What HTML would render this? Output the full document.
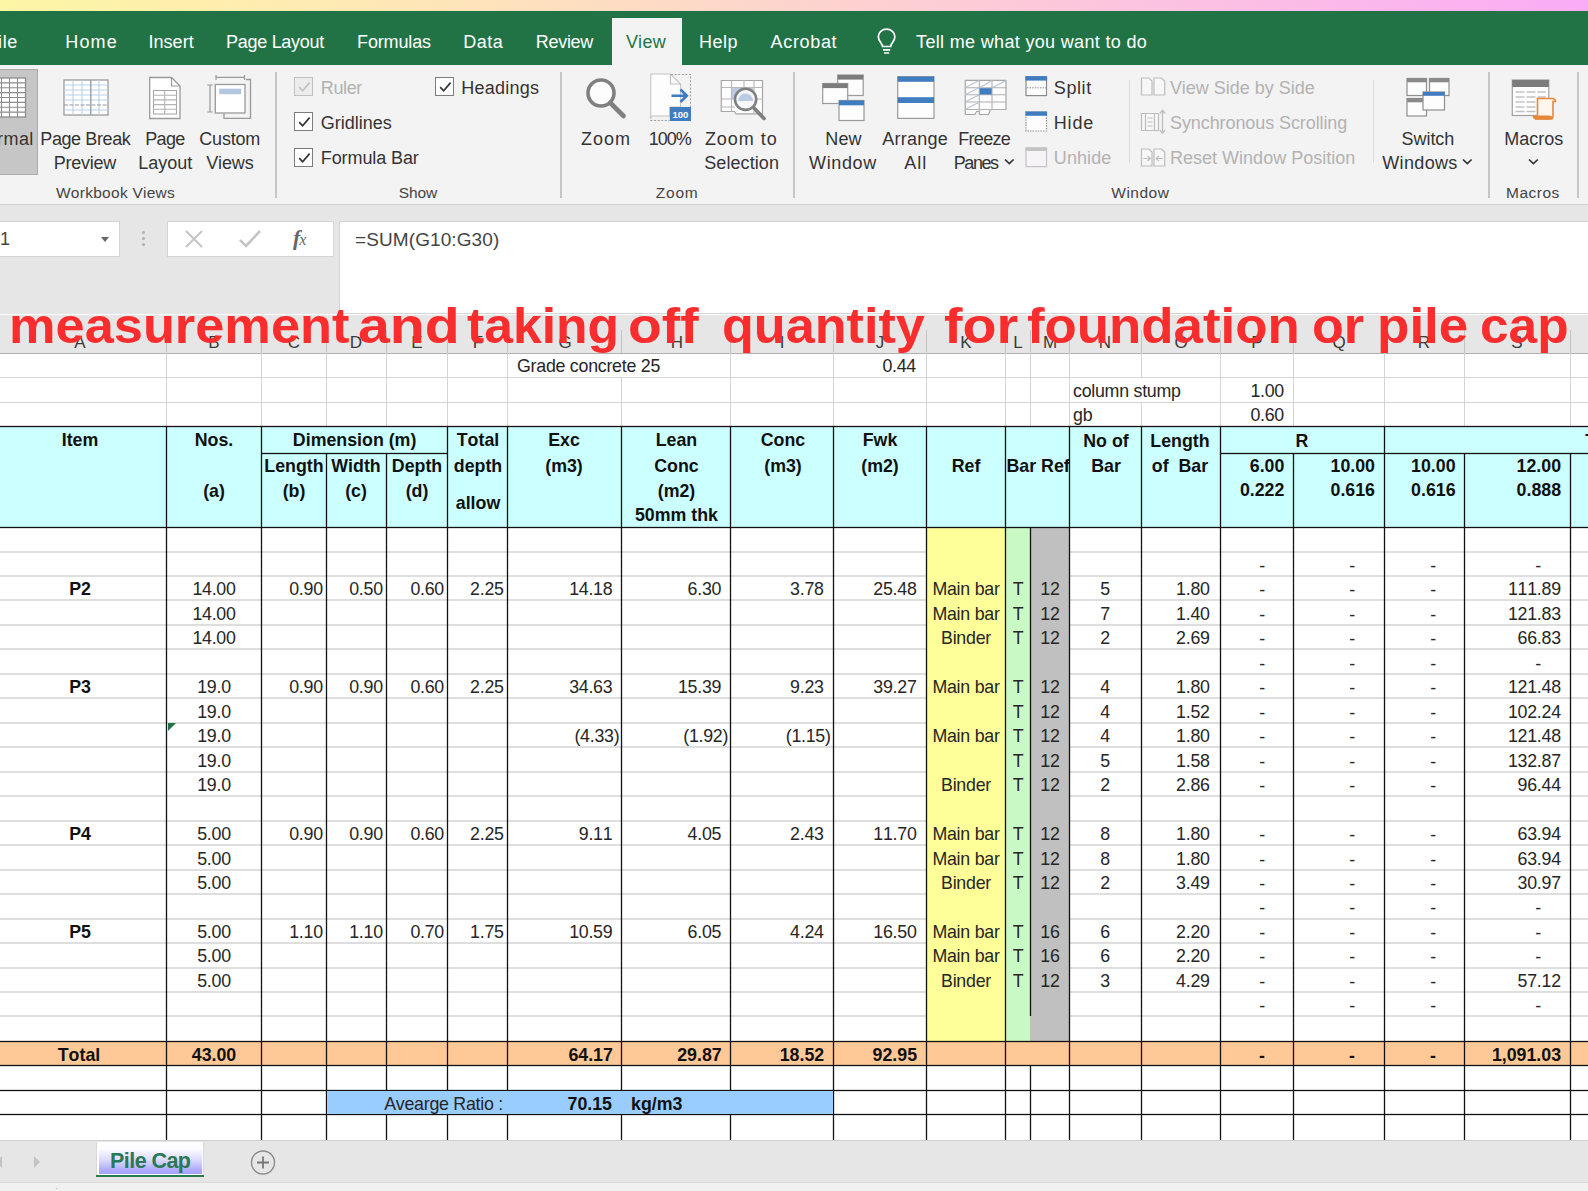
<!DOCTYPE html>
<html><head><meta charset="utf-8"><title>Pile Cap</title>
<style>
*{box-sizing:border-box;margin:0;padding:0}
html,body{width:1588px;height:1191px;overflow:hidden;background:#fff;font-family:"Liberation Sans",sans-serif;}
#page{position:absolute;left:0;top:0;width:1588px;height:1191px;overflow:hidden;background:#fff}
.r{position:absolute}
.vl{box-shadow:1px 0 0 rgba(0,0,0,.14),-1px 0 0 rgba(0,0,0,.14)}
.hl{box-shadow:0 1px 0 rgba(0,0,0,.14),0 -1px 0 rgba(0,0,0,.14)}
.t{position:absolute;height:24px;line-height:24px;font-size:17.8px;color:#262626;white-space:nowrap;letter-spacing:-0.25px;font-kerning:none}
.t.b{font-weight:bold;color:#111;letter-spacing:0}
.t.ch{font-size:17px;color:#3a3a3a;letter-spacing:0}
#grad{position:absolute;left:0;top:0;width:1588px;height:11px;background:linear-gradient(90deg,#fdf6a4 0%,#fee7b6 25%,#fdd4cd 50%,#fcc1e2 75%,#f9acf6 100%)}
#green{position:absolute;left:0;top:10.5px;width:1588px;height:54px;background:#217346}
.tab{position:absolute;top:29px;height:24px;line-height:24px;font-size:18px;color:#fff;white-space:nowrap;transform:translateX(-50%)}
#viewtab{position:absolute;left:612px;top:18px;width:70px;height:47px;background:#f3f3f3}
#ribbon{position:absolute;left:0;top:64.5px;width:1588px;height:139.5px;background:#f3f3f3}
#ribgap{position:absolute;left:0;top:204px;width:1588px;height:110px;background:#e6e6e6;border-top:1px solid #d2d2d2}
.rl{position:absolute;height:24px;line-height:24px;font-size:18px;color:#333;white-space:nowrap;transform:translateX(-50%)}
.rs{position:absolute;height:24px;line-height:24px;font-size:18px;color:#333;white-space:nowrap}
.dis{color:#b4b4b4}
.gl{position:absolute;height:20px;line-height:20px;font-size:15.5px;color:#444;white-space:nowrap;transform:translateX(-50%);top:182px}
.sep{position:absolute;top:72px;width:2px;height:126px;background:#c6c6c6}
.sep2{position:absolute;top:80px;width:1px;height:83px;background:#dcdcdc}
.cb{position:absolute;width:19px;height:19px;border:1.3px solid #7c7c7c;background:#fff}
.cb.d{border-color:#c0c0c0;background:#ececec}
svg{position:absolute;overflow:visible}
#title{position:absolute;left:0;top:293.8px;width:1588px;height:64px}
.tw{position:absolute;top:0;height:64px;line-height:64px;font-size:50px;font-weight:bold;color:#f92d2d;white-space:nowrap;transform-origin:0 50%}
</style></head><body><div id="page">
<div id="grad"></div>
<div id="green"></div>
<div id="viewtab"></div>
<div id="ribbon"></div>
<div id="ribgap"></div>
<div class="r" style="left:-3px;top:69px;width:41px;height:106px;background:#c6c6c6;border:1px solid #ababab"></div>
<div class="sep" style="left:275px"></div>
<div class="sep" style="left:560px"></div>
<div class="sep" style="left:793px"></div>
<div class="sep" style="left:1488px"></div>
<div class="sep" style="left:1577px"></div>
<div class="sep2" style="left:1128.5px"></div>
<div class="sep2" style="left:1372.5px"></div>
<div class="cb d" style="left:294px;top:76.5px"><svg style="left:3px;top:3px" width="13" height="12" viewBox="0 0 13 12"><path d="M1.2 6.2 L4.6 9.8 L11.6 1.6" stroke="#c2c2c2" stroke-width="1.7" fill="none"/></svg></div>
<div class="cb" style="left:294px;top:112px"><svg style="left:3px;top:3px" width="13" height="12" viewBox="0 0 13 12"><path d="M1.2 6.2 L4.6 9.8 L11.6 1.6" stroke="#333" stroke-width="1.7" fill="none"/></svg></div>
<div class="cb" style="left:294px;top:147.5px"><svg style="left:3px;top:3px" width="13" height="12" viewBox="0 0 13 12"><path d="M1.2 6.2 L4.6 9.8 L11.6 1.6" stroke="#333" stroke-width="1.7" fill="none"/></svg></div>
<div class="cb" style="left:435px;top:76.5px"><svg style="left:3px;top:3px" width="13" height="12" viewBox="0 0 13 12"><path d="M1.2 6.2 L4.6 9.8 L11.6 1.6" stroke="#333" stroke-width="1.7" fill="none"/></svg></div>
<svg style="left:0;top:0" width="1588" height="210" viewBox="0 0 1588 210" fill="none">
<!-- bulb -->
<g stroke="#fff" stroke-width="1.7" fill="none">
<path d="M882.5 46.5 C882.5 43 878.3 41.5 878.3 36.8 C878.3 32.2 882 29.2 886.6 29.2 C891.2 29.2 894.9 32.2 894.9 36.8 C894.9 41.5 890.7 43 890.7 46.5 Z"/>
<path d="M883 49.8 H890.2 M884 53 H889.2"/>
</g>
<!-- Normal icon (partly off-screen) -->
<g>
<rect x="-20" y="78" width="45.5" height="39" fill="#fff" stroke="#8c8c8c" stroke-width="1.3"/>
<path d="M-20 82.88H25.5 M-20 87.75H25.5 M-20 92.62H25.5 M-20 97.50H25.5 M-20 102.38H25.5 M-20 107.25H25.5 M-20 112.12H25.5 M17.5 78V117 M9.5 78V117 M1.5 78V117 M-6.5 78V117 M-14.5 78V117" stroke="#8c8c8c" stroke-width="1.1"/>
</g>
<!-- Page Break Preview -->
<g>
<rect x="64" y="80" width="44" height="35" fill="#fff" stroke="#9a9a9a" stroke-width="1.3"/>
<path d="M64 85H108 M64 90H108 M64 95H108 M64 100H108 M64 110H108 M73 80V115 M82 80V115 M99 80V115" stroke="#bcd0e8" stroke-width="1.1"/>
<path d="M90.8 80V115" stroke="#8f9aa8" stroke-width="1.3"/>
<path d="M64 105H108" stroke="#8f9aa8" stroke-width="1.2" stroke-dasharray="4 1.5"/>
</g>
<!-- Page Layout -->
<g>
<path d="M149.7 77.5 H171.5 L180 86 V118.5 H149.7 Z" fill="#fff" stroke="#9a9a9a" stroke-width="1.3"/>
<path d="M171.5 77.5 V86 H180" stroke="#9a9a9a" stroke-width="1.2"/>
<rect x="153.5" y="90.5" width="23" height="23.5" fill="#fff" stroke="#a8a8a8" stroke-width="1.1"/>
<path d="M153.5 95.2H176.5 M153.5 99.9H176.5 M153.5 104.6H176.5 M153.5 109.3H176.5 M164.7 90.5V114" stroke="#b4b4b4" stroke-width="1.1"/>
</g>
<!-- Custom Views -->
<g stroke="#9a9a9a" stroke-width="1.3">
<path d="M246 79.5 H250.5 V118.3 H224 V113.5"/>
<rect x="215.3" y="84.5" width="29.7" height="28.5" fill="#fff"/>
<rect x="219.2" y="88.7" width="22" height="5.5" fill="#b4c7e0" stroke="none"/>
<path d="M210 85V112 M207.3 85H212.7 M207.3 112H212.7 M216 77.3H244.5 M216 75V80 M244.5 75V80" stroke-width="1.2"/>
</g>
<!-- Zoom magnifier -->
<g>
<circle cx="601" cy="93" r="13" fill="#fdfdfd" stroke="#808080" stroke-width="3.6"/>
<path d="M610.5 103 L623.5 116" stroke="#808080" stroke-width="4.6" stroke-linecap="round"/>
</g>
<!-- 100% -->
<g>
<path d="M650.8 74 H670.5 L680.5 84 V107 H669.8 V116 H650.8 Z" fill="#fdfdfd" stroke="#c4c4c4" stroke-width="1.1"/>
<path d="M670.5 74 V84 H680.5" stroke="#bdbdbd" stroke-width="1.1"/>
<path d="M671 74.5 H690.5 V107 M650.8 116.5 V120.5 H669.5" stroke="#a0a0a0" stroke-width="1.1" stroke-dasharray="2 1.6"/>
<path d="M671.5 95.7 H686 M680.5 89.5 L686.8 95.7 L680.5 102" stroke="#3b7bc4" stroke-width="2.6"/>
<rect x="669.8" y="107" width="21.2" height="14" fill="#3f7cc0"/>
<text x="680.4" y="118" font-family="Liberation Sans, sans-serif" font-size="9.5" font-weight="bold" fill="#fff" text-anchor="middle" stroke="none">100</text>
</g>
<!-- Zoom to Selection -->
<g>
<path d="M721.3 80.5 H762.5 V113.8 H736 L734.5 111.5 H721.3 Z" fill="#fdfdfd" stroke="#a6a6a6" stroke-width="1.2"/>
<path d="M721.3 87.5H762.5 M721.3 99H762.5 M721.3 107H735 M731.5 80.5V111.5 M744 80.5V90 M754 80.5V113.8" stroke="#b8b8b8" stroke-width="1.1"/>
<rect x="732" y="88" width="21.5" height="11" fill="#bccbe4"/>
<circle cx="745.6" cy="99.3" r="10.6" fill="#f6f8fb" stroke="#808080" stroke-width="2.6"/>
<path d="M738 101 A7.6 7.6 0 0 1 753.2 101 Z" fill="#bccbe4" stroke="none"/>
<path d="M753.5 107.5 L764 118.5" stroke="#808080" stroke-width="3.8" stroke-linecap="round"/>
</g>
<!-- New Window -->
<g stroke="#9a9a9a" stroke-width="1.2">
<rect x="837.7" y="75" width="25.5" height="20.5" fill="#fdfdfd"/><rect x="837.7" y="75" width="25.5" height="4.6" fill="#7c7c7c" stroke="none"/>
<rect x="822.7" y="83.5" width="25" height="20" fill="#fdfdfd"/><rect x="822.7" y="83.5" width="25" height="4.6" fill="#7c7c7c" stroke="none"/>
<rect x="839" y="100.5" width="25" height="20" fill="#fdfdfd"/><rect x="839" y="100.5" width="25" height="4.8" fill="#3f7cc0" stroke="none"/>
</g>
<!-- Arrange All -->
<g>
<rect x="897.7" y="76.6" width="36.3" height="41.8" fill="#fdfdfd" stroke="#9a9a9a" stroke-width="1.2"/>
<rect x="897.7" y="76.6" width="36.3" height="5.2" fill="#3f7cc0"/>
<rect x="897.7" y="97.2" width="36.3" height="5.8" fill="#3f7cc0"/>
</g>
<!-- Freeze Panes -->
<g>
<path d="M965.3 80.3 H1006 V109.5 H990.5 L988.5 114.5 H979.5 V111.5 H976.5 L975 114.5 H965.3 Z" fill="#fdfdfd" stroke="#a6a6a6" stroke-width="1.2"/>
<path d="M965.3 87.8H1006 M965.3 94.8H1006 M965.3 102H1006 M965.3 109.5H1006 M979.3 80.3V114 M992 80.3V109.5" stroke="#b0b0b0" stroke-width="1.1"/>
<path d="M965.5 87.5 L979 80.5 M965.5 94.5 L979 87.8 M965.5 101.8 L979 95 M965.5 109.3 L979 102.2 M980 87.5 L992 80.5 M993 87.5 L1006 80.5" stroke="#b6c4d8" stroke-width="1.1"/>
<rect x="979.7" y="88.2" width="12" height="6.3" fill="#3f7cc0"/>
</g>
<!-- chevrons -->
<g stroke="#333" stroke-width="1.7" fill="none">
<path d="M1005 159.5 L1009.3 163.6 L1013.6 159.5"/>
<path d="M1463 159.5 L1467.3 163.6 L1471.6 159.5"/>
<path d="M1529 159.5 L1533.4 163.6 L1537.8 159.5"/>
</g>
<!-- Split / Hide / Unhide -->
<g>
<rect x="1026" y="76.8" width="20.5" height="18.8" fill="#fdfdfd" stroke="#8a8a8a" stroke-width="1.2"/>
<rect x="1025.4" y="76.2" width="21.7" height="4.4" fill="#3f7cc0"/>
<path d="M1027 87.8H1046" stroke="#8a8a8a" stroke-width="1" stroke-dasharray="1.4 1.2"/>
<rect x="1026" y="112" width="20.5" height="19" fill="#fdfdfd" stroke="#8a8a8a" stroke-width="1.2" stroke-dasharray="1.4 1.2"/>
<rect x="1025.4" y="111.4" width="21.7" height="4.4" fill="#3f7cc0"/>
<rect x="1026" y="148" width="20.5" height="18.6" fill="#f7f4f7" stroke="#c4c4c4" stroke-width="1.2"/>
<rect x="1025.4" y="147.4" width="21.7" height="3.6" fill="#c4c4c4"/>
</g>
<!-- View side by side (disabled) -->
<g stroke="#bdbdbd" stroke-width="1.2" fill="#f7f7f7">
<path d="M1141.5 78 H1149 L1152 81 V95 H1141.5 Z"/>
<path d="M1154 78 H1161.5 L1164.7 81 V95 H1154 Z"/>
<!-- sync scrolling -->
<path d="M1141.5 113.5 H1158.5 V130.5 H1141.5 Z"/>
<path d="M1145.5 113.5 V130.5 M1154.5 113.5 V130.5 M1147.5 118H1152.5 M1147.5 122H1152.5 M1147.5 126H1152.5" fill="none"/>
<path d="M1162.5 110.5 V133 M1159.8 113.5 L1162.5 110.3 L1165.2 113.5 M1159.8 130 L1162.5 133.2 L1165.2 130" fill="none"/>
<!-- reset window pos -->
<path d="M1141.5 149 H1149 L1152 152 V166 H1141.5 Z"/>
<path d="M1154 149 H1161.5 L1164.7 152 V166 H1154 Z"/>
<path d="M1143.5 158.5 H1150 M1147.5 155.8 L1150.2 158.5 L1147.5 161.2 M1163 158.5 H1156.5 M1159 155.8 L1156.3 158.5 L1159 161.2" fill="none"/>
</g>
<!-- Switch Windows -->
<g stroke="#8f8f8f" stroke-width="1.2">
<rect x="1407" y="78.5" width="19.5" height="17" fill="#fdfdfd"/><rect x="1407" y="78.5" width="19.5" height="3.8" fill="#8a8a8a" stroke="none"/>
<rect x="1429.5" y="78.5" width="19.5" height="17" fill="#fdfdfd"/><rect x="1429.5" y="78.5" width="19.5" height="3.8" fill="#8a8a8a" stroke="none"/>
<rect x="1407" y="98.5" width="19.5" height="17.5" fill="#fdfdfd"/><rect x="1407" y="98.5" width="19.5" height="3.8" fill="#8a8a8a" stroke="none"/>
<rect x="1423" y="92" width="21.5" height="18" fill="#fdfdfd"/><rect x="1423" y="92" width="21.5" height="3.8" fill="#3f7cc0" stroke="none"/>
</g>
<!-- Macros -->
<g>
<rect x="1512.3" y="80" width="36.5" height="35.5" fill="#fdfdfd" stroke="#a0a0a0" stroke-width="1.2"/>
<rect x="1512.3" y="80" width="36.5" height="7" fill="#7c7c7c"/>
<path d="M1515.5 92H1546 M1515.5 97H1546 M1515.5 102H1546 M1515.5 107H1546 M1515.5 111.5H1546" stroke="#c2c2c2" stroke-width="1.3" stroke-dasharray="9 2"/>
<path d="M1537.5 98.5 H1552 Q1555.5 98.5 1555.5 101.5 H1553 V116 Q1553 119 1549.5 119 H1535 Q1538 118.5 1537.5 114 Z" fill="#fdf6ee" stroke="#e8873a" stroke-width="1.6"/>
<path d="M1533 116 H1549 Q1552.5 116 1552.8 119 H1536 Q1533 119 1533 116 Z" fill="#e8873a" stroke="#e8873a" stroke-width="1"/>
</g>
</svg>

<div class="rs" style="left:-13.7px;top:29.5px;font-size:18px;color:#fff;letter-spacing:0.66px">File</div>
<div class="rs" style="left:65.3px;top:29.5px;font-size:18px;color:#fff;letter-spacing:1.13px">Home</div>
<div class="rs" style="left:148.5px;top:29.5px;font-size:18px;color:#fff;letter-spacing:0.03px">Insert</div>
<div class="rs" style="left:226.0px;top:29.5px;font-size:18px;color:#fff;letter-spacing:-0.28px">Page Layout</div>
<div class="rs" style="left:357.1px;top:29.5px;font-size:18px;color:#fff;letter-spacing:-0.16px">Formulas</div>
<div class="rs" style="left:463.3px;top:29.5px;font-size:18px;color:#fff;letter-spacing:0.49px">Data</div>
<div class="rs" style="left:535.8px;top:29.5px;font-size:18px;color:#fff;letter-spacing:-0.31px">Review</div>
<div class="rs" style="left:625.9px;top:29.5px;font-size:18px;color:#217346;letter-spacing:0.43px">View</div>
<div class="rs" style="left:698.9px;top:29.5px;font-size:18px;color:#fff;letter-spacing:0.56px">Help</div>
<div class="rs" style="left:770.6px;top:29.5px;font-size:18px;color:#fff;letter-spacing:0.66px">Acrobat</div>
<div class="rs" style="left:916.1px;top:29.5px;font-size:18px;color:#fff;letter-spacing:0.33px">Tell me what you want to do</div>
<div class="rs" style="left:-26.7px;top:126.5px;font-size:18px;color:#333;letter-spacing:0.40px">Normal</div>
<div class="rs" style="left:40.3px;top:126.5px;font-size:18px;color:#333;letter-spacing:-0.40px">Page Break</div>
<div class="rs" style="left:53.8px;top:151.0px;font-size:18px;color:#333;letter-spacing:-0.26px">Preview</div>
<div class="rs" style="left:145.3px;top:126.5px;font-size:18px;color:#333;letter-spacing:-0.68px">Page</div>
<div class="rs" style="left:138.3px;top:151.0px;font-size:18px;color:#333;letter-spacing:-0.01px">Layout</div>
<div class="rs" style="left:199.3px;top:126.5px;font-size:18px;color:#333;letter-spacing:-0.20px">Custom</div>
<div class="rs" style="left:206.3px;top:151.0px;font-size:18px;color:#333;letter-spacing:-0.05px">Views</div>
<div class="rs" style="left:56.1px;top:181.0px;font-size:15.5px;color:#444;letter-spacing:0.30px">Workbook Views</div>
<div class="rs" style="left:320.8px;top:75.5px;font-size:18px;color:#b2b2b2;letter-spacing:-0.38px">Ruler</div>
<div class="rs" style="left:320.8px;top:110.5px;font-size:18px;color:#333;letter-spacing:-0.00px">Gridlines</div>
<div class="rs" style="left:320.8px;top:146.0px;font-size:18px;color:#333;letter-spacing:-0.10px">Formula Bar</div>
<div class="rs" style="left:461.3px;top:75.5px;font-size:18px;color:#333;letter-spacing:0.25px">Headings</div>
<div class="rs" style="left:398.8px;top:181.0px;font-size:15.5px;color:#444;letter-spacing:-0.16px">Show</div>
<div class="rs" style="left:580.9px;top:126.5px;font-size:18px;color:#333;letter-spacing:1.03px">Zoom</div>
<div class="rs" style="left:648.8px;top:126.5px;font-size:18px;color:#333;letter-spacing:-1.02px">100%</div>
<div class="rs" style="left:704.9px;top:126.5px;font-size:18px;color:#333;letter-spacing:0.98px">Zoom to</div>
<div class="rs" style="left:704.3px;top:151.0px;font-size:18px;color:#333;letter-spacing:0.07px">Selection</div>
<div class="rs" style="left:655.8px;top:181.0px;font-size:15.5px;color:#444;letter-spacing:0.76px">Zoom</div>
<div class="rs" style="left:825.3px;top:126.5px;font-size:18px;color:#333;letter-spacing:0.14px">New</div>
<div class="rs" style="left:809.0px;top:151.0px;font-size:18px;color:#333;letter-spacing:0.65px">Window</div>
<div class="rs" style="left:882.3px;top:126.5px;font-size:18px;color:#333;letter-spacing:0.23px">Arrange</div>
<div class="rs" style="left:904.3px;top:151.0px;font-size:18px;color:#333;letter-spacing:0.99px">All</div>
<div class="rs" style="left:958.3px;top:126.5px;font-size:18px;color:#333;letter-spacing:-0.71px">Freeze</div>
<div class="rs" style="left:953.8px;top:151.0px;font-size:18px;color:#333;letter-spacing:-1.44px">Panes</div>
<div class="rs" style="left:1053.8px;top:75.5px;font-size:18px;color:#333;letter-spacing:0.60px">Split</div>
<div class="rs" style="left:1053.8px;top:110.5px;font-size:18px;color:#333;letter-spacing:0.82px">Hide</div>
<div class="rs" style="left:1053.8px;top:146.0px;font-size:18px;color:#b2b2b2;letter-spacing:0.09px">Unhide</div>
<div class="rs" style="left:1170.0px;top:75.5px;font-size:18px;color:#b2b2b2;letter-spacing:0.00px">View Side by Side</div>
<div class="rs" style="left:1170.0px;top:110.5px;font-size:18px;color:#b2b2b2;letter-spacing:-0.09px">Synchronous Scrolling</div>
<div class="rs" style="left:1170.0px;top:146.0px;font-size:18px;color:#b2b2b2;letter-spacing:0.01px">Reset Window Position</div>
<div class="rs" style="left:1401.6px;top:126.5px;font-size:18px;color:#333;letter-spacing:-0.06px">Switch</div>
<div class="rs" style="left:1382.3px;top:151.0px;font-size:18px;color:#333;letter-spacing:0.33px">Windows</div>
<div class="rs" style="left:1504.3px;top:126.5px;font-size:18px;color:#333;letter-spacing:-0.00px">Macros</div>
<div class="rs" style="left:1111.3px;top:181.0px;font-size:15.5px;color:#444;letter-spacing:0.49px">Window</div>
<div class="rs" style="left:1506.0px;top:181.0px;font-size:15.5px;color:#444;letter-spacing:0.49px">Macros</div>
<div class="r" style="left:-2px;top:221px;width:122px;height:36px;background:#fff;border:1px solid #d4d4d4"></div>
<div class="rs" style="left:0;top:227px;color:#444">1</div>
<div class="r" style="left:101px;top:237px;width:0;height:0;border-left:4.5px solid transparent;border-right:4.5px solid transparent;border-top:5px solid #666"></div>
<div class="r" style="left:142px;top:231px;width:3px;height:3px;border-radius:2px;background:#b0b0b0;box-shadow:0 6px 0 #b0b0b0,0 12px 0 #b0b0b0"></div>
<div class="r" style="left:167px;top:221px;width:167px;height:36px;background:#fff;border:1px solid #d4d4d4"></div>
<svg style="left:184px;top:229px" width="20" height="20" viewBox="0 0 20 20"><path d="M2 2 L18 18 M18 2 L2 18" stroke="#c4c4c4" stroke-width="2" fill="none"/></svg>
<svg style="left:238px;top:229px" width="24" height="20" viewBox="0 0 24 20"><path d="M2 11 L8 17 L22 2" stroke="#c4c4c4" stroke-width="2.6" fill="none"/></svg>
<div class="rs" style="left:293px;top:226px;font-family:'Liberation Serif',serif;font-style:italic;font-size:22px;color:#666"><b>f</b><span style="font-size:16px;margin-left:-1px">x</span></div>
<div class="r" style="left:339px;top:221px;width:1260px;height:93px;background:#fff;border:1px solid #d4d4d4"></div>
<div class="rs" style="left:355px;top:228px;color:#444;font-size:19px;letter-spacing:0.1px">=SUM(G10:G30)</div>

<div id="sheet">
<div class="r" style="left:0.0px;top:315.0px;width:1588.0px;height:38.0px;background:#e6e6e6;"></div>
<div class="r" style="left:0.0px;top:352.5px;width:1588.0px;height:1.0px;background:#b0b0b0;"></div>
<div class="t ch" style="left:-70.0px;width:300px;text-align:center;top:331.0px;">A</div>
<div class="t ch" style="left:64.0px;width:300px;text-align:center;top:331.0px;">B</div>
<div class="t ch" style="left:144.0px;width:300px;text-align:center;top:331.0px;">C</div>
<div class="t ch" style="left:206.0px;width:300px;text-align:center;top:331.0px;">D</div>
<div class="t ch" style="left:267.0px;width:300px;text-align:center;top:331.0px;">E</div>
<div class="t ch" style="left:328.0px;width:300px;text-align:center;top:331.0px;">F</div>
<div class="t ch" style="left:415.0px;width:300px;text-align:center;top:331.0px;">G</div>
<div class="t ch" style="left:527.0px;width:300px;text-align:center;top:331.0px;">H</div>
<div class="t ch" style="left:632.0px;width:300px;text-align:center;top:331.0px;">I</div>
<div class="t ch" style="left:730.0px;width:300px;text-align:center;top:331.0px;">J</div>
<div class="t ch" style="left:816.0px;width:300px;text-align:center;top:331.0px;">K</div>
<div class="t ch" style="left:868.0px;width:300px;text-align:center;top:331.0px;">L</div>
<div class="t ch" style="left:900.0px;width:300px;text-align:center;top:331.0px;">M</div>
<div class="t ch" style="left:955.0px;width:300px;text-align:center;top:331.0px;">N</div>
<div class="t ch" style="left:1031.0px;width:300px;text-align:center;top:331.0px;">O</div>
<div class="t ch" style="left:1107.0px;width:300px;text-align:center;top:331.0px;">P</div>
<div class="t ch" style="left:1189.0px;width:300px;text-align:center;top:331.0px;">Q</div>
<div class="t ch" style="left:1274.0px;width:300px;text-align:center;top:331.0px;">R</div>
<div class="t ch" style="left:1367.0px;width:300px;text-align:center;top:331.0px;">S</div>
<div class="r" style="left:166.0px;top:330.0px;width:1.0px;height:23.0px;background:#c4c4c4;"></div>
<div class="r" style="left:261.0px;top:330.0px;width:1.0px;height:23.0px;background:#c4c4c4;"></div>
<div class="r" style="left:326.0px;top:330.0px;width:1.0px;height:23.0px;background:#c4c4c4;"></div>
<div class="r" style="left:386.0px;top:330.0px;width:1.0px;height:23.0px;background:#c4c4c4;"></div>
<div class="r" style="left:447.0px;top:330.0px;width:1.0px;height:23.0px;background:#c4c4c4;"></div>
<div class="r" style="left:507.0px;top:330.0px;width:1.0px;height:23.0px;background:#c4c4c4;"></div>
<div class="r" style="left:621.0px;top:330.0px;width:1.0px;height:23.0px;background:#c4c4c4;"></div>
<div class="r" style="left:730.0px;top:330.0px;width:1.0px;height:23.0px;background:#c4c4c4;"></div>
<div class="r" style="left:833.0px;top:330.0px;width:1.0px;height:23.0px;background:#c4c4c4;"></div>
<div class="r" style="left:926.0px;top:330.0px;width:1.0px;height:23.0px;background:#c4c4c4;"></div>
<div class="r" style="left:1005.0px;top:330.0px;width:1.0px;height:23.0px;background:#c4c4c4;"></div>
<div class="r" style="left:1030.0px;top:330.0px;width:1.0px;height:23.0px;background:#c4c4c4;"></div>
<div class="r" style="left:1069.0px;top:330.0px;width:1.0px;height:23.0px;background:#c4c4c4;"></div>
<div class="r" style="left:1141.0px;top:330.0px;width:1.0px;height:23.0px;background:#c4c4c4;"></div>
<div class="r" style="left:1220.0px;top:330.0px;width:1.0px;height:23.0px;background:#c4c4c4;"></div>
<div class="r" style="left:1293.0px;top:330.0px;width:1.0px;height:23.0px;background:#c4c4c4;"></div>
<div class="r" style="left:1384.0px;top:330.0px;width:1.0px;height:23.0px;background:#c4c4c4;"></div>
<div class="r" style="left:1464.0px;top:330.0px;width:1.0px;height:23.0px;background:#c4c4c4;"></div>
<div class="r" style="left:1570.0px;top:330.0px;width:1.0px;height:23.0px;background:#c4c4c4;"></div>
<div class="r" style="left:0.0px;top:377.0px;width:1588.0px;height:1.0px;background:#d4d4d4;"></div>
<div class="r" style="left:0.0px;top:402.0px;width:1588.0px;height:1.0px;background:#d4d4d4;"></div>
<div class="r" style="left:166.0px;top:353.0px;width:1.0px;height:74.0px;background:#d4d4d4;"></div>
<div class="r" style="left:261.0px;top:353.0px;width:1.0px;height:74.0px;background:#d4d4d4;"></div>
<div class="r" style="left:326.0px;top:353.0px;width:1.0px;height:74.0px;background:#d4d4d4;"></div>
<div class="r" style="left:386.0px;top:353.0px;width:1.0px;height:74.0px;background:#d4d4d4;"></div>
<div class="r" style="left:447.0px;top:353.0px;width:1.0px;height:74.0px;background:#d4d4d4;"></div>
<div class="r" style="left:507.0px;top:353.0px;width:1.0px;height:74.0px;background:#d4d4d4;"></div>
<div class="r" style="left:621.0px;top:378.0px;width:1.0px;height:49.0px;background:#d4d4d4;"></div>
<div class="r" style="left:730.0px;top:353.0px;width:1.0px;height:74.0px;background:#d4d4d4;"></div>
<div class="r" style="left:833.0px;top:353.0px;width:1.0px;height:74.0px;background:#d4d4d4;"></div>
<div class="r" style="left:926.0px;top:353.0px;width:1.0px;height:74.0px;background:#d4d4d4;"></div>
<div class="r" style="left:1005.0px;top:353.0px;width:1.0px;height:74.0px;background:#d4d4d4;"></div>
<div class="r" style="left:1030.0px;top:353.0px;width:1.0px;height:74.0px;background:#d4d4d4;"></div>
<div class="r" style="left:1069.0px;top:353.0px;width:1.0px;height:74.0px;background:#d4d4d4;"></div>
<div class="r" style="left:1141.0px;top:353.0px;width:1.0px;height:25.0px;background:#d4d4d4;"></div>
<div class="r" style="left:1141.0px;top:403.0px;width:1.0px;height:24.0px;background:#d4d4d4;"></div>
<div class="r" style="left:1220.0px;top:353.0px;width:1.0px;height:74.0px;background:#d4d4d4;"></div>
<div class="r" style="left:1293.0px;top:353.0px;width:1.0px;height:74.0px;background:#d4d4d4;"></div>
<div class="r" style="left:1384.0px;top:353.0px;width:1.0px;height:74.0px;background:#d4d4d4;"></div>
<div class="r" style="left:1464.0px;top:353.0px;width:1.0px;height:74.0px;background:#d4d4d4;"></div>
<div class="r" style="left:1570.0px;top:353.0px;width:1.0px;height:74.0px;background:#d4d4d4;"></div>
<div class="r" style="left:0.0px;top:427.0px;width:1588.0px;height:100.5px;background:#ccffff;"></div>
<div class="r" style="left:926.1px;top:527.0px;width:79.4px;height:514.0px;background:#ffff99;"></div>
<div class="r" style="left:1005.5px;top:527.0px;width:24.7px;height:514.0px;background:#c9fac6;"></div>
<div class="r" style="left:1030.2px;top:527.0px;width:39.3px;height:514.0px;background:#c0c0c0;"></div>
<div class="r" style="left:0.0px;top:550.5px;width:926.1px;height:2.0px;background:#dedede;"></div>
<div class="r" style="left:1069.5px;top:550.5px;width:518.5px;height:2.0px;background:#dedede;"></div>
<div class="r" style="left:0.0px;top:574.9px;width:926.1px;height:2.0px;background:#dedede;"></div>
<div class="r" style="left:1069.5px;top:574.9px;width:518.5px;height:2.0px;background:#dedede;"></div>
<div class="r" style="left:0.0px;top:599.4px;width:926.1px;height:2.0px;background:#dedede;"></div>
<div class="r" style="left:1069.5px;top:599.4px;width:518.5px;height:2.0px;background:#dedede;"></div>
<div class="r" style="left:0.0px;top:623.9px;width:926.1px;height:2.0px;background:#dedede;"></div>
<div class="r" style="left:1069.5px;top:623.9px;width:518.5px;height:2.0px;background:#dedede;"></div>
<div class="r" style="left:0.0px;top:648.4px;width:926.1px;height:2.0px;background:#dedede;"></div>
<div class="r" style="left:1069.5px;top:648.4px;width:518.5px;height:2.0px;background:#dedede;"></div>
<div class="r" style="left:0.0px;top:672.8px;width:926.1px;height:2.0px;background:#dedede;"></div>
<div class="r" style="left:1069.5px;top:672.8px;width:518.5px;height:2.0px;background:#dedede;"></div>
<div class="r" style="left:0.0px;top:697.3px;width:926.1px;height:2.0px;background:#dedede;"></div>
<div class="r" style="left:1069.5px;top:697.3px;width:518.5px;height:2.0px;background:#dedede;"></div>
<div class="r" style="left:0.0px;top:721.8px;width:926.1px;height:2.0px;background:#dedede;"></div>
<div class="r" style="left:1069.5px;top:721.8px;width:518.5px;height:2.0px;background:#dedede;"></div>
<div class="r" style="left:0.0px;top:746.2px;width:926.1px;height:2.0px;background:#dedede;"></div>
<div class="r" style="left:1069.5px;top:746.2px;width:518.5px;height:2.0px;background:#dedede;"></div>
<div class="r" style="left:0.0px;top:770.7px;width:926.1px;height:2.0px;background:#dedede;"></div>
<div class="r" style="left:1069.5px;top:770.7px;width:518.5px;height:2.0px;background:#dedede;"></div>
<div class="r" style="left:0.0px;top:795.2px;width:926.1px;height:2.0px;background:#dedede;"></div>
<div class="r" style="left:1069.5px;top:795.2px;width:518.5px;height:2.0px;background:#dedede;"></div>
<div class="r" style="left:0.0px;top:819.6px;width:926.1px;height:2.0px;background:#dedede;"></div>
<div class="r" style="left:1069.5px;top:819.6px;width:518.5px;height:2.0px;background:#dedede;"></div>
<div class="r" style="left:0.0px;top:844.1px;width:926.1px;height:2.0px;background:#dedede;"></div>
<div class="r" style="left:1069.5px;top:844.1px;width:518.5px;height:2.0px;background:#dedede;"></div>
<div class="r" style="left:0.0px;top:868.6px;width:926.1px;height:2.0px;background:#dedede;"></div>
<div class="r" style="left:1069.5px;top:868.6px;width:518.5px;height:2.0px;background:#dedede;"></div>
<div class="r" style="left:0.0px;top:893.0px;width:926.1px;height:2.0px;background:#dedede;"></div>
<div class="r" style="left:1069.5px;top:893.0px;width:518.5px;height:2.0px;background:#dedede;"></div>
<div class="r" style="left:0.0px;top:917.5px;width:926.1px;height:2.0px;background:#dedede;"></div>
<div class="r" style="left:1069.5px;top:917.5px;width:518.5px;height:2.0px;background:#dedede;"></div>
<div class="r" style="left:0.0px;top:942.0px;width:926.1px;height:2.0px;background:#dedede;"></div>
<div class="r" style="left:1069.5px;top:942.0px;width:518.5px;height:2.0px;background:#dedede;"></div>
<div class="r" style="left:0.0px;top:966.5px;width:926.1px;height:2.0px;background:#dedede;"></div>
<div class="r" style="left:1069.5px;top:966.5px;width:518.5px;height:2.0px;background:#dedede;"></div>
<div class="r" style="left:0.0px;top:990.9px;width:926.1px;height:2.0px;background:#dedede;"></div>
<div class="r" style="left:1069.5px;top:990.9px;width:518.5px;height:2.0px;background:#dedede;"></div>
<div class="r" style="left:0.0px;top:1015.4px;width:926.1px;height:2.0px;background:#dedede;"></div>
<div class="r" style="left:1069.5px;top:1015.4px;width:518.5px;height:2.0px;background:#dedede;"></div>
<div class="r" style="left:0.0px;top:1041.0px;width:1588.0px;height:25.0px;background:#ffc997;"></div>
<div class="r hl" style="left:0.0px;top:426.0px;width:1588.0px;height:1.0px;background:#111;"></div>
<div class="r hl" style="left:0.0px;top:527.0px;width:1588.0px;height:1.0px;background:#111;"></div>
<div class="r hl" style="left:0.0px;top:1041.0px;width:1588.0px;height:1.0px;background:#111;"></div>
<div class="r hl" style="left:0.0px;top:1065.0px;width:1588.0px;height:1.0px;background:#111;"></div>
<div class="r hl" style="left:0.0px;top:1090.0px;width:1588.0px;height:1.0px;background:#111;"></div>
<div class="r hl" style="left:0.0px;top:1114.0px;width:1588.0px;height:1.0px;background:#111;"></div>
<div class="r hl" style="left:261.4px;top:453.0px;width:186.4px;height:1.0px;background:#111;"></div>
<div class="r hl" style="left:1220.0px;top:453.0px;width:368.0px;height:1.0px;background:#111;"></div>
<div class="r vl" style="left:166.0px;top:427.0px;width:1.0px;height:713.0px;background:#111;"></div>
<div class="r vl" style="left:261.0px;top:427.0px;width:1.0px;height:713.0px;background:#111;"></div>
<div class="r vl" style="left:447.0px;top:427.0px;width:1.0px;height:713.0px;background:#111;"></div>
<div class="r vl" style="left:507.0px;top:427.0px;width:1.0px;height:713.0px;background:#111;"></div>
<div class="r vl" style="left:621.0px;top:427.0px;width:1.0px;height:713.0px;background:#111;"></div>
<div class="r vl" style="left:730.0px;top:427.0px;width:1.0px;height:713.0px;background:#111;"></div>
<div class="r vl" style="left:833.0px;top:427.0px;width:1.0px;height:713.0px;background:#111;"></div>
<div class="r vl" style="left:926.0px;top:427.0px;width:1.0px;height:713.0px;background:#111;"></div>
<div class="r vl" style="left:1005.0px;top:427.0px;width:1.0px;height:713.0px;background:#111;"></div>
<div class="r vl" style="left:1069.0px;top:427.0px;width:1.0px;height:713.0px;background:#111;"></div>
<div class="r vl" style="left:1141.0px;top:427.0px;width:1.0px;height:713.0px;background:#111;"></div>
<div class="r vl" style="left:1220.0px;top:427.0px;width:1.0px;height:713.0px;background:#111;"></div>
<div class="r vl" style="left:1384.0px;top:427.0px;width:1.0px;height:713.0px;background:#111;"></div>
<div class="r vl" style="left:326.0px;top:453.0px;width:1.0px;height:687.0px;background:#111;"></div>
<div class="r vl" style="left:386.0px;top:453.0px;width:1.0px;height:687.0px;background:#111;"></div>
<div class="r vl" style="left:1293.0px;top:453.0px;width:1.0px;height:687.0px;background:#111;"></div>
<div class="r vl" style="left:1464.0px;top:453.0px;width:1.0px;height:687.0px;background:#111;"></div>
<div class="r vl" style="left:1570.0px;top:453.0px;width:1.0px;height:687.0px;background:#111;"></div>
<div class="r vl" style="left:1030.0px;top:527.0px;width:1.0px;height:489.0px;background:#111;"></div>
<div class="r vl" style="left:1030.0px;top:1066.0px;width:1.0px;height:74.0px;background:#111;"></div>
<div class="r" style="left:327.1px;top:1091.0px;width:505.6px;height:23.0px;background:#99ccff;"></div>
<div class="t b" style="left:-70.0px;width:300px;text-align:center;top:427.5px;">Item</div>
<div class="t b" style="left:64.0px;width:300px;text-align:center;top:427.5px;">Nos.</div>
<div class="t b" style="left:64.0px;width:300px;text-align:center;top:479.0px;">(a)</div>
<div class="t b" style="left:144.0px;width:300px;text-align:center;top:454.0px;">Length</div>
<div class="t b" style="left:144.0px;width:300px;text-align:center;top:479.0px;">(b)</div>
<div class="t b" style="left:206.0px;width:300px;text-align:center;top:454.0px;">Width</div>
<div class="t b" style="left:206.0px;width:300px;text-align:center;top:479.0px;">(c)</div>
<div class="t b" style="left:267.0px;width:300px;text-align:center;top:454.0px;">Depth</div>
<div class="t b" style="left:267.0px;width:300px;text-align:center;top:479.0px;">(d)</div>
<div class="t b" style="left:328.0px;width:300px;text-align:center;top:427.5px;">Total</div>
<div class="t b" style="left:328.0px;width:300px;text-align:center;top:454.0px;">depth</div>
<div class="t b" style="left:328.0px;width:300px;text-align:center;top:491.3px;">allow</div>
<div class="t b" style="left:414.0px;width:300px;text-align:center;top:427.5px;">Exc</div>
<div class="t b" style="left:414.0px;width:300px;text-align:center;top:454.0px;">(m3)</div>
<div class="t b" style="left:526.5px;width:300px;text-align:center;top:427.5px;">Lean</div>
<div class="t b" style="left:526.5px;width:300px;text-align:center;top:454.0px;">Conc</div>
<div class="t b" style="left:526.5px;width:300px;text-align:center;top:479.0px;">(m2)</div>
<div class="t b" style="left:526.5px;width:300px;text-align:center;top:503.0px;">50mm thk</div>
<div class="t b" style="left:633.0px;width:300px;text-align:center;top:427.5px;">Conc</div>
<div class="t b" style="left:633.0px;width:300px;text-align:center;top:454.0px;">(m3)</div>
<div class="t b" style="left:730.0px;width:300px;text-align:center;top:427.5px;">Fwk</div>
<div class="t b" style="left:730.0px;width:300px;text-align:center;top:454.0px;">(m2)</div>
<div class="t b" style="left:816.0px;width:300px;text-align:center;top:454.0px;">Ref</div>
<div class="t b" style="left:956.0px;width:300px;text-align:center;top:429.0px;">No of</div>
<div class="t b" style="left:956.0px;width:300px;text-align:center;top:454.0px;">Bar</div>
<div class="t b" style="left:1030.0px;width:300px;text-align:center;top:429.0px;">Length</div>
<div class="t b" style="left:1030.0px;width:300px;text-align:center;top:454.0px;">of&nbsp; Bar</div>
<div class="t b" style="left:204.6px;width:300px;text-align:center;top:427.5px;">Dimension (m)</div>
<div class="t b" style="left:1006.5px;width:62.0px;overflow:hidden;white-space:nowrap;top:454px;">Bar Ref</div>
<div class="t b" style="left:1152.0px;width:300px;text-align:center;top:429.0px;">R</div>
<div class="t b" style="left:1585.3px;text-align:left;top:429.0px;">T</div>
<div class="t b" style="left:984.4px;width:300px;text-align:right;top:454.0px;">6.00</div>
<div class="t b" style="left:984.4px;width:300px;text-align:right;top:478.0px;">0.222</div>
<div class="t b" style="left:1075.0px;width:300px;text-align:right;top:454.0px;">10.00</div>
<div class="t b" style="left:1075.0px;width:300px;text-align:right;top:478.0px;">0.616</div>
<div class="t b" style="left:1155.6px;width:300px;text-align:right;top:454.0px;">10.00</div>
<div class="t b" style="left:1155.6px;width:300px;text-align:right;top:478.0px;">0.616</div>
<div class="t b" style="left:1261.1px;width:300px;text-align:right;top:454.0px;">12.00</div>
<div class="t b" style="left:1261.1px;width:300px;text-align:right;top:478.0px;">0.888</div>
<div class="t " style="left:517.0px;text-align:left;top:354.0px;">Grade concrete 25</div>
<div class="t " style="left:616.0px;width:300px;text-align:right;top:354.0px;">0.44</div>
<div class="t " style="left:1073.0px;text-align:left;top:378.5px;">column stump</div>
<div class="t " style="left:984.0px;width:300px;text-align:right;top:378.5px;">1.00</div>
<div class="t " style="left:1073.0px;text-align:left;top:403.0px;">gb</div>
<div class="t " style="left:984.0px;width:300px;text-align:right;top:403.0px;">0.60</div>
<div class="t " style="left:1112.0px;width:300px;text-align:center;top:553.9px;">-</div>
<div class="t " style="left:1202.0px;width:300px;text-align:center;top:553.9px;">-</div>
<div class="t " style="left:1283.0px;width:300px;text-align:center;top:553.9px;">-</div>
<div class="t " style="left:1388.0px;width:300px;text-align:center;top:553.9px;">-</div>
<div class="t b" style="left:-70.0px;width:300px;text-align:center;top:577.3px;">P2</div>
<div class="t " style="left:64.0px;width:300px;text-align:center;top:577.3px;">14.00</div>
<div class="t " style="left:22.8px;width:300px;text-align:right;top:577.3px;">0.90</div>
<div class="t " style="left:82.8px;width:300px;text-align:right;top:577.3px;">0.50</div>
<div class="t " style="left:144.0px;width:300px;text-align:right;top:577.3px;">0.60</div>
<div class="t " style="left:203.7px;width:300px;text-align:right;top:577.3px;">2.25</div>
<div class="t " style="left:312.4px;width:300px;text-align:right;top:577.3px;">14.18</div>
<div class="t " style="left:421.2px;width:300px;text-align:right;top:577.3px;">6.30</div>
<div class="t " style="left:523.7px;width:300px;text-align:right;top:577.3px;">3.78</div>
<div class="t " style="left:616.6px;width:300px;text-align:right;top:577.3px;">25.48</div>
<div class="t " style="left:816.0px;width:300px;text-align:center;top:577.3px;">Main bar</div>
<div class="t " style="left:868.0px;width:300px;text-align:center;top:577.3px;">T</div>
<div class="t " style="left:900.0px;width:300px;text-align:center;top:577.3px;">12</div>
<div class="t " style="left:955.0px;width:300px;text-align:center;top:577.3px;">5</div>
<div class="t " style="left:909.7px;width:300px;text-align:right;top:577.3px;">1.80</div>
<div class="t " style="left:1260.8px;width:300px;text-align:right;top:577.3px;">111.89</div>
<div class="t " style="left:1112.0px;width:300px;text-align:center;top:578.3px;">-</div>
<div class="t " style="left:1202.0px;width:300px;text-align:center;top:578.3px;">-</div>
<div class="t " style="left:1283.0px;width:300px;text-align:center;top:578.3px;">-</div>
<div class="t " style="left:64.0px;width:300px;text-align:center;top:601.8px;">14.00</div>
<div class="t " style="left:816.0px;width:300px;text-align:center;top:601.8px;">Main bar</div>
<div class="t " style="left:868.0px;width:300px;text-align:center;top:601.8px;">T</div>
<div class="t " style="left:900.0px;width:300px;text-align:center;top:601.8px;">12</div>
<div class="t " style="left:955.0px;width:300px;text-align:center;top:601.8px;">7</div>
<div class="t " style="left:909.7px;width:300px;text-align:right;top:601.8px;">1.40</div>
<div class="t " style="left:1260.8px;width:300px;text-align:right;top:601.8px;">121.83</div>
<div class="t " style="left:1112.0px;width:300px;text-align:center;top:602.8px;">-</div>
<div class="t " style="left:1202.0px;width:300px;text-align:center;top:602.8px;">-</div>
<div class="t " style="left:1283.0px;width:300px;text-align:center;top:602.8px;">-</div>
<div class="t " style="left:64.0px;width:300px;text-align:center;top:626.3px;">14.00</div>
<div class="t " style="left:816.0px;width:300px;text-align:center;top:626.3px;">Binder</div>
<div class="t " style="left:868.0px;width:300px;text-align:center;top:626.3px;">T</div>
<div class="t " style="left:900.0px;width:300px;text-align:center;top:626.3px;">12</div>
<div class="t " style="left:955.0px;width:300px;text-align:center;top:626.3px;">2</div>
<div class="t " style="left:909.7px;width:300px;text-align:right;top:626.3px;">2.69</div>
<div class="t " style="left:1260.8px;width:300px;text-align:right;top:626.3px;">66.83</div>
<div class="t " style="left:1112.0px;width:300px;text-align:center;top:627.3px;">-</div>
<div class="t " style="left:1202.0px;width:300px;text-align:center;top:627.3px;">-</div>
<div class="t " style="left:1283.0px;width:300px;text-align:center;top:627.3px;">-</div>
<div class="t " style="left:1388.0px;width:300px;text-align:center;top:651.8px;">-</div>
<div class="t " style="left:1112.0px;width:300px;text-align:center;top:651.8px;">-</div>
<div class="t " style="left:1202.0px;width:300px;text-align:center;top:651.8px;">-</div>
<div class="t " style="left:1283.0px;width:300px;text-align:center;top:651.8px;">-</div>
<div class="t b" style="left:-70.0px;width:300px;text-align:center;top:675.2px;">P3</div>
<div class="t " style="left:64.0px;width:300px;text-align:center;top:675.2px;">19.0</div>
<div class="t " style="left:22.8px;width:300px;text-align:right;top:675.2px;">0.90</div>
<div class="t " style="left:82.8px;width:300px;text-align:right;top:675.2px;">0.90</div>
<div class="t " style="left:144.0px;width:300px;text-align:right;top:675.2px;">0.60</div>
<div class="t " style="left:203.7px;width:300px;text-align:right;top:675.2px;">2.25</div>
<div class="t " style="left:312.4px;width:300px;text-align:right;top:675.2px;">34.63</div>
<div class="t " style="left:421.2px;width:300px;text-align:right;top:675.2px;">15.39</div>
<div class="t " style="left:523.7px;width:300px;text-align:right;top:675.2px;">9.23</div>
<div class="t " style="left:616.6px;width:300px;text-align:right;top:675.2px;">39.27</div>
<div class="t " style="left:816.0px;width:300px;text-align:center;top:675.2px;">Main bar</div>
<div class="t " style="left:868.0px;width:300px;text-align:center;top:675.2px;">T</div>
<div class="t " style="left:900.0px;width:300px;text-align:center;top:675.2px;">12</div>
<div class="t " style="left:955.0px;width:300px;text-align:center;top:675.2px;">4</div>
<div class="t " style="left:909.7px;width:300px;text-align:right;top:675.2px;">1.80</div>
<div class="t " style="left:1260.8px;width:300px;text-align:right;top:675.2px;">121.48</div>
<div class="t " style="left:1112.0px;width:300px;text-align:center;top:676.2px;">-</div>
<div class="t " style="left:1202.0px;width:300px;text-align:center;top:676.2px;">-</div>
<div class="t " style="left:1283.0px;width:300px;text-align:center;top:676.2px;">-</div>
<div class="t " style="left:64.0px;width:300px;text-align:center;top:699.7px;">19.0</div>
<div class="t " style="left:868.0px;width:300px;text-align:center;top:699.7px;">T</div>
<div class="t " style="left:900.0px;width:300px;text-align:center;top:699.7px;">12</div>
<div class="t " style="left:955.0px;width:300px;text-align:center;top:699.7px;">4</div>
<div class="t " style="left:909.7px;width:300px;text-align:right;top:699.7px;">1.52</div>
<div class="t " style="left:1260.8px;width:300px;text-align:right;top:699.7px;">102.24</div>
<div class="t " style="left:1112.0px;width:300px;text-align:center;top:700.7px;">-</div>
<div class="t " style="left:1202.0px;width:300px;text-align:center;top:700.7px;">-</div>
<div class="t " style="left:1283.0px;width:300px;text-align:center;top:700.7px;">-</div>
<div class="t " style="left:64.0px;width:300px;text-align:center;top:724.2px;">19.0</div>
<div class="t " style="left:319.4px;width:300px;text-align:right;top:724.2px;">(4.33)</div>
<div class="t " style="left:428.2px;width:300px;text-align:right;top:724.2px;">(1.92)</div>
<div class="t " style="left:530.7px;width:300px;text-align:right;top:724.2px;">(1.15)</div>
<div class="t " style="left:816.0px;width:300px;text-align:center;top:724.2px;">Main bar</div>
<div class="t " style="left:868.0px;width:300px;text-align:center;top:724.2px;">T</div>
<div class="t " style="left:900.0px;width:300px;text-align:center;top:724.2px;">12</div>
<div class="t " style="left:955.0px;width:300px;text-align:center;top:724.2px;">4</div>
<div class="t " style="left:909.7px;width:300px;text-align:right;top:724.2px;">1.80</div>
<div class="t " style="left:1260.8px;width:300px;text-align:right;top:724.2px;">121.48</div>
<div class="t " style="left:1112.0px;width:300px;text-align:center;top:725.2px;">-</div>
<div class="t " style="left:1202.0px;width:300px;text-align:center;top:725.2px;">-</div>
<div class="t " style="left:1283.0px;width:300px;text-align:center;top:725.2px;">-</div>
<div class="t " style="left:64.0px;width:300px;text-align:center;top:748.6px;">19.0</div>
<div class="t " style="left:868.0px;width:300px;text-align:center;top:748.6px;">T</div>
<div class="t " style="left:900.0px;width:300px;text-align:center;top:748.6px;">12</div>
<div class="t " style="left:955.0px;width:300px;text-align:center;top:748.6px;">5</div>
<div class="t " style="left:909.7px;width:300px;text-align:right;top:748.6px;">1.58</div>
<div class="t " style="left:1260.8px;width:300px;text-align:right;top:748.6px;">132.87</div>
<div class="t " style="left:1112.0px;width:300px;text-align:center;top:749.6px;">-</div>
<div class="t " style="left:1202.0px;width:300px;text-align:center;top:749.6px;">-</div>
<div class="t " style="left:1283.0px;width:300px;text-align:center;top:749.6px;">-</div>
<div class="t " style="left:64.0px;width:300px;text-align:center;top:773.1px;">19.0</div>
<div class="t " style="left:816.0px;width:300px;text-align:center;top:773.1px;">Binder</div>
<div class="t " style="left:868.0px;width:300px;text-align:center;top:773.1px;">T</div>
<div class="t " style="left:900.0px;width:300px;text-align:center;top:773.1px;">12</div>
<div class="t " style="left:955.0px;width:300px;text-align:center;top:773.1px;">2</div>
<div class="t " style="left:909.7px;width:300px;text-align:right;top:773.1px;">2.86</div>
<div class="t " style="left:1260.8px;width:300px;text-align:right;top:773.1px;">96.44</div>
<div class="t " style="left:1112.0px;width:300px;text-align:center;top:774.1px;">-</div>
<div class="t " style="left:1202.0px;width:300px;text-align:center;top:774.1px;">-</div>
<div class="t " style="left:1283.0px;width:300px;text-align:center;top:774.1px;">-</div>
<div class="t b" style="left:-70.0px;width:300px;text-align:center;top:822.0px;">P4</div>
<div class="t " style="left:64.0px;width:300px;text-align:center;top:822.0px;">5.00</div>
<div class="t " style="left:22.8px;width:300px;text-align:right;top:822.0px;">0.90</div>
<div class="t " style="left:82.8px;width:300px;text-align:right;top:822.0px;">0.90</div>
<div class="t " style="left:144.0px;width:300px;text-align:right;top:822.0px;">0.60</div>
<div class="t " style="left:203.7px;width:300px;text-align:right;top:822.0px;">2.25</div>
<div class="t " style="left:312.4px;width:300px;text-align:right;top:822.0px;">9.11</div>
<div class="t " style="left:421.2px;width:300px;text-align:right;top:822.0px;">4.05</div>
<div class="t " style="left:523.7px;width:300px;text-align:right;top:822.0px;">2.43</div>
<div class="t " style="left:616.6px;width:300px;text-align:right;top:822.0px;">11.70</div>
<div class="t " style="left:816.0px;width:300px;text-align:center;top:822.0px;">Main bar</div>
<div class="t " style="left:868.0px;width:300px;text-align:center;top:822.0px;">T</div>
<div class="t " style="left:900.0px;width:300px;text-align:center;top:822.0px;">12</div>
<div class="t " style="left:955.0px;width:300px;text-align:center;top:822.0px;">8</div>
<div class="t " style="left:909.7px;width:300px;text-align:right;top:822.0px;">1.80</div>
<div class="t " style="left:1260.8px;width:300px;text-align:right;top:822.0px;">63.94</div>
<div class="t " style="left:1112.0px;width:300px;text-align:center;top:823.0px;">-</div>
<div class="t " style="left:1202.0px;width:300px;text-align:center;top:823.0px;">-</div>
<div class="t " style="left:1283.0px;width:300px;text-align:center;top:823.0px;">-</div>
<div class="t " style="left:64.0px;width:300px;text-align:center;top:846.5px;">5.00</div>
<div class="t " style="left:816.0px;width:300px;text-align:center;top:846.5px;">Main bar</div>
<div class="t " style="left:868.0px;width:300px;text-align:center;top:846.5px;">T</div>
<div class="t " style="left:900.0px;width:300px;text-align:center;top:846.5px;">12</div>
<div class="t " style="left:955.0px;width:300px;text-align:center;top:846.5px;">8</div>
<div class="t " style="left:909.7px;width:300px;text-align:right;top:846.5px;">1.80</div>
<div class="t " style="left:1260.8px;width:300px;text-align:right;top:846.5px;">63.94</div>
<div class="t " style="left:1112.0px;width:300px;text-align:center;top:847.5px;">-</div>
<div class="t " style="left:1202.0px;width:300px;text-align:center;top:847.5px;">-</div>
<div class="t " style="left:1283.0px;width:300px;text-align:center;top:847.5px;">-</div>
<div class="t " style="left:64.0px;width:300px;text-align:center;top:871.0px;">5.00</div>
<div class="t " style="left:816.0px;width:300px;text-align:center;top:871.0px;">Binder</div>
<div class="t " style="left:868.0px;width:300px;text-align:center;top:871.0px;">T</div>
<div class="t " style="left:900.0px;width:300px;text-align:center;top:871.0px;">12</div>
<div class="t " style="left:955.0px;width:300px;text-align:center;top:871.0px;">2</div>
<div class="t " style="left:909.7px;width:300px;text-align:right;top:871.0px;">3.49</div>
<div class="t " style="left:1260.8px;width:300px;text-align:right;top:871.0px;">30.97</div>
<div class="t " style="left:1112.0px;width:300px;text-align:center;top:872.0px;">-</div>
<div class="t " style="left:1202.0px;width:300px;text-align:center;top:872.0px;">-</div>
<div class="t " style="left:1283.0px;width:300px;text-align:center;top:872.0px;">-</div>
<div class="t " style="left:1388.0px;width:300px;text-align:center;top:896.4px;">-</div>
<div class="t " style="left:1112.0px;width:300px;text-align:center;top:896.4px;">-</div>
<div class="t " style="left:1202.0px;width:300px;text-align:center;top:896.4px;">-</div>
<div class="t " style="left:1283.0px;width:300px;text-align:center;top:896.4px;">-</div>
<div class="t b" style="left:-70.0px;width:300px;text-align:center;top:919.9px;">P5</div>
<div class="t " style="left:64.0px;width:300px;text-align:center;top:919.9px;">5.00</div>
<div class="t " style="left:22.8px;width:300px;text-align:right;top:919.9px;">1.10</div>
<div class="t " style="left:82.8px;width:300px;text-align:right;top:919.9px;">1.10</div>
<div class="t " style="left:144.0px;width:300px;text-align:right;top:919.9px;">0.70</div>
<div class="t " style="left:203.7px;width:300px;text-align:right;top:919.9px;">1.75</div>
<div class="t " style="left:312.4px;width:300px;text-align:right;top:919.9px;">10.59</div>
<div class="t " style="left:421.2px;width:300px;text-align:right;top:919.9px;">6.05</div>
<div class="t " style="left:523.7px;width:300px;text-align:right;top:919.9px;">4.24</div>
<div class="t " style="left:616.6px;width:300px;text-align:right;top:919.9px;">16.50</div>
<div class="t " style="left:816.0px;width:300px;text-align:center;top:919.9px;">Main bar</div>
<div class="t " style="left:868.0px;width:300px;text-align:center;top:919.9px;">T</div>
<div class="t " style="left:900.0px;width:300px;text-align:center;top:919.9px;">16</div>
<div class="t " style="left:955.0px;width:300px;text-align:center;top:919.9px;">6</div>
<div class="t " style="left:909.7px;width:300px;text-align:right;top:919.9px;">2.20</div>
<div class="t " style="left:1388.0px;width:300px;text-align:center;top:920.9px;">-</div>
<div class="t " style="left:1112.0px;width:300px;text-align:center;top:920.9px;">-</div>
<div class="t " style="left:1202.0px;width:300px;text-align:center;top:920.9px;">-</div>
<div class="t " style="left:1283.0px;width:300px;text-align:center;top:920.9px;">-</div>
<div class="t " style="left:64.0px;width:300px;text-align:center;top:944.4px;">5.00</div>
<div class="t " style="left:816.0px;width:300px;text-align:center;top:944.4px;">Main bar</div>
<div class="t " style="left:868.0px;width:300px;text-align:center;top:944.4px;">T</div>
<div class="t " style="left:900.0px;width:300px;text-align:center;top:944.4px;">16</div>
<div class="t " style="left:955.0px;width:300px;text-align:center;top:944.4px;">6</div>
<div class="t " style="left:909.7px;width:300px;text-align:right;top:944.4px;">2.20</div>
<div class="t " style="left:1388.0px;width:300px;text-align:center;top:945.4px;">-</div>
<div class="t " style="left:1112.0px;width:300px;text-align:center;top:945.4px;">-</div>
<div class="t " style="left:1202.0px;width:300px;text-align:center;top:945.4px;">-</div>
<div class="t " style="left:1283.0px;width:300px;text-align:center;top:945.4px;">-</div>
<div class="t " style="left:64.0px;width:300px;text-align:center;top:968.9px;">5.00</div>
<div class="t " style="left:816.0px;width:300px;text-align:center;top:968.9px;">Binder</div>
<div class="t " style="left:868.0px;width:300px;text-align:center;top:968.9px;">T</div>
<div class="t " style="left:900.0px;width:300px;text-align:center;top:968.9px;">12</div>
<div class="t " style="left:955.0px;width:300px;text-align:center;top:968.9px;">3</div>
<div class="t " style="left:909.7px;width:300px;text-align:right;top:968.9px;">4.29</div>
<div class="t " style="left:1260.8px;width:300px;text-align:right;top:968.9px;">57.12</div>
<div class="t " style="left:1112.0px;width:300px;text-align:center;top:969.9px;">-</div>
<div class="t " style="left:1202.0px;width:300px;text-align:center;top:969.9px;">-</div>
<div class="t " style="left:1283.0px;width:300px;text-align:center;top:969.9px;">-</div>
<div class="t " style="left:1388.0px;width:300px;text-align:center;top:994.3px;">-</div>
<div class="t " style="left:1112.0px;width:300px;text-align:center;top:994.3px;">-</div>
<div class="t " style="left:1202.0px;width:300px;text-align:center;top:994.3px;">-</div>
<div class="t " style="left:1283.0px;width:300px;text-align:center;top:994.3px;">-</div>
<div class="t b" style="left:-71.0px;width:300px;text-align:center;top:1042.5px;">Total</div>
<div class="t b" style="left:64.0px;width:300px;text-align:center;top:1042.5px;">43.00</div>
<div class="t b" style="left:312.9px;width:300px;text-align:right;top:1042.5px;">64.17</div>
<div class="t b" style="left:421.7px;width:300px;text-align:right;top:1042.5px;">29.87</div>
<div class="t b" style="left:524.2px;width:300px;text-align:right;top:1042.5px;">18.52</div>
<div class="t b" style="left:617.1px;width:300px;text-align:right;top:1042.5px;">92.95</div>
<div class="t b" style="left:1261.1px;width:300px;text-align:right;top:1042.5px;">1,091.03</div>
<div class="t b" style="left:1112.0px;width:300px;text-align:center;top:1043.5px;">-</div>
<div class="t b" style="left:1202.0px;width:300px;text-align:center;top:1043.5px;">-</div>
<div class="t b" style="left:1283.0px;width:300px;text-align:center;top:1043.5px;">-</div>
<div class="t " style="left:203.0px;width:300px;text-align:right;top:1092.0px;">Avearge Ratio :</div>
<div class="t b" style="left:312.0px;width:300px;text-align:right;top:1092.0px;">70.15</div>
<div class="t b" style="left:631.0px;text-align:left;top:1092.0px;">kg/m3</div>
<div style="position:absolute;left:168px;top:723.3px;width:0;height:0;border-top:8px solid #217346;border-right:8px solid transparent;"></div>
<div id="title"><span class="tw" style="left:8.7px;transform:scaleX(1.0470)">measurement</span><span class="tw" style="left:358.3px;transform:scaleX(1.1453)">and</span><span class="tw" style="left:466.5px;transform:scaleX(1.0334)">taking</span><span class="tw" style="left:627.5px;transform:scaleX(1.1053)">off</span><span class="tw" style="left:722.4px;transform:scaleX(1.0431)">quantity</span><span class="tw" style="left:943.6px;transform:scaleX(1.1145)">for</span><span class="tw" style="left:1027.4px;transform:scaleX(1.0562)">foundation</span><span class="tw" style="left:1311.8px;transform:scaleX(1.0434)">or</span><span class="tw" style="left:1377.0px;transform:scaleX(1.0604)">pile</span><span class="tw" style="left:1480.4px;transform:scaleX(1.0286)">cap</span></div>
</div>
<div class="r" style="left:0;top:1140px;width:1588px;height:42px;background:#e6e6e6;border-top:1px solid #cfcfcf"></div>
<div class="r" style="left:0;top:1182px;width:1588px;height:9px;background:#f1f1f1;border-top:1px solid #dadada"></div>
<div class="r" style="left:96px;top:1142px;width:108px;height:34px;background:#fdfdfd;border-left:1px solid #d8d8d8;border-right:1px solid #d8d8d8"></div>
<div class="r" style="left:98.5px;top:1142px;width:103px;height:31.5px;background:linear-gradient(180deg,#ffffff 0%,#fbfbff 22%,#dddbff 55%,#aeaafd 88%,#a5a1fc 100%)"></div>
<div class="r" style="left:96px;top:1175px;width:108px;height:2px;background:#2a7a50"></div>
<div class="rs" style="left:110px;top:1148.5px;font-size:21.5px;font-weight:bold;color:#2b7852;letter-spacing:-0.55px">Pile Cap</div>
<div class="r" style="left:34px;top:1156px;width:0;height:0;border-top:6px solid transparent;border-bottom:6px solid transparent;border-left:6px solid #c4c4c4"></div>
<div class="r" style="left:-4px;top:1156px;width:0;height:0;border-top:6px solid transparent;border-bottom:6px solid transparent;border-right:6px solid #c4c4c4"></div>
<svg style="left:250px;top:1150px" width="26" height="26" viewBox="0 0 26 26"><circle cx="13" cy="12.5" r="11.5" fill="none" stroke="#8a8a8a" stroke-width="1.4"/><path d="M13 6.5 V18.5 M7 12.5 H19" stroke="#777" stroke-width="1.8" fill="none"/></svg>
<div class="r" style="left:55px;top:1187px;width:6px;height:4px;color:#555;font-size:8px;line-height:8px">ˈ</div>

</div></body></html>
